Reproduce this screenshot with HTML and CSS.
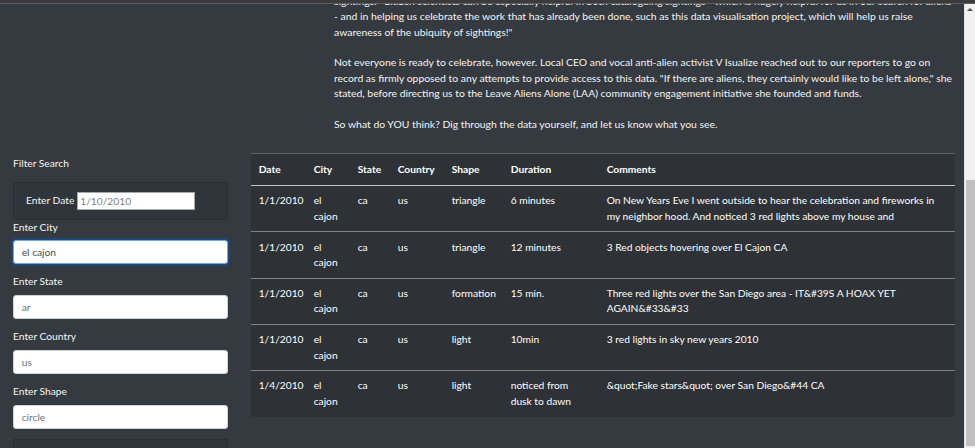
FILE: index.html
```html
<!DOCTYPE html>
<html lang="en">
<head>
<meta charset="utf-8">
<title>UFO Sightings</title>
<link rel="stylesheet" href="styles.css">
</head>
<body>
<div class="topbar"></div>
<div class="page">
  <main class="main">
    <section class="article">
      <p>sightings. "Citizen scientists can be especially helpful in both cataloguing sightings - which is hugely helpful for us in our search for aliens - and in helping us celebrate the work that has already been done, such as this data visualisation project, which will help us raise awareness of the ubiquity of sightings!"<br><br>Not everyone is ready to celebrate, however. Local CEO and vocal anti-alien activist V Isualize reached out to our reporters to go on record as firmly opposed to any attempts to provide access to this data. "If there are aliens, they certainly would like to be left alone," she stated, before directing us to the Leave Aliens Alone (LAA) community engagement initiative she founded and funds.<br><br>So what do YOU think? Dig through the data yourself, and let us know what you see.</p>
    </section>
    <div class="content">
      <aside class="filters">
        <div class="filter-title">Filter Search</div>
        <div class="date-box">
          <label class="date-label" for="datetime">Enter Date</label>
          <input class="date-input" id="datetime" type="text" placeholder="1/10/2010">
        </div>
        <div class="group">
          <label class="lbl" for="city">Enter City</label>
          <input class="ctl focus" id="city" type="text" value="el cajon">
        </div>
        <div class="group">
          <label class="lbl" for="state">Enter State</label>
          <input class="ctl" id="state" type="text" placeholder="ar">
        </div>
        <div class="group">
          <label class="lbl" for="country">Enter Country</label>
          <input class="ctl" id="country" type="text" placeholder="us">
        </div>
        <div class="group">
          <label class="lbl" for="shape">Enter Shape</label>
          <input class="ctl" id="shape" type="text" placeholder="circle">
        </div>
        <div class="btn-box"></div>
      </aside>
      <div class="table-wrap">
        <table class="ufo">
          <colgroup>
            <col style="width:55px"><col style="width:44px"><col style="width:40px"><col style="width:54px"><col style="width:59px"><col style="width:96px"><col>
          </colgroup>
          <thead>
            <tr><th>Date</th><th>City</th><th>State</th><th>Country</th><th>Shape</th><th>Duration</th><th>Comments</th></tr>
          </thead>
          <tbody>
            <tr><td>1/1/2010</td><td>el cajon</td><td>ca</td><td>us</td><td>triangle</td><td>6 minutes</td><td>On New Years Eve I went outside to hear the celebration and fireworks in my neighbor hood. And noticed 3 red lights above my house and</td></tr>
            <tr><td>1/1/2010</td><td>el cajon</td><td>ca</td><td>us</td><td>triangle</td><td>12 minutes</td><td>3 Red objects hovering over El Cajon CA</td></tr>
            <tr><td>1/1/2010</td><td>el cajon</td><td>ca</td><td>us</td><td>formation</td><td>15 min.</td><td>Three red lights over the San Diego area - IT&amp;#39S A HOAX YET AGAIN&amp;#33&amp;#33</td></tr>
            <tr><td>1/1/2010</td><td>el cajon</td><td>ca</td><td>us</td><td>light</td><td>10min</td><td>3 red lights in sky new years 2010</td></tr>
            <tr><td>1/4/2010</td><td>el cajon</td><td>ca</td><td>us</td><td>light</td><td>noticed from dusk to dawn</td><td>&amp;quot;Fake stars&amp;quot; over San Diego&amp;#44 CA</td></tr>
          </tbody>
        </table>
      </div>
    </div>
  </main>
  <div class="scrollbar">
    <div class="sb-arrow"></div>
    <div class="sb-track"><div class="sb-thumb"></div></div>
  </div>
</div>
</body>
</html>
```
FILE: styles.css
```css
* { box-sizing: border-box; }
html, body { margin: 0; padding: 0; height: 100%; overflow: hidden; }
body {
  background: #343a40;
  color: #f4f4f4;
  font-family: Lato, "Open Sans", sans-serif;
  font-size: 10.24px;
  line-height: 15.36px;
}
.topbar {
  position: fixed;
  top: 0; left: 0; right: 0;
  height: 4px;
  background: #3b3b3b;
  border-bottom: 1px solid #5c5f64;
  z-index: 5;
}
.page { display: flex; height: 448px; }
.main { flex: 1; min-width: 0; }
.article { margin-top: -6px; padding: 0 7px 0 334px; font-size: 10.4px; }
.article p { margin: 0; }
.content { display: flex; margin-top: 21px; align-items: flex-start; }
.filters { width: 215px; margin-left: 13px; padding-top: 3px; }
.filter-title { margin-bottom: 10px; }
.date-box {
  background: #30353b;
  border: 1px solid #2b2f34;
  height: 38px;
  padding: 8px 12px;
  display: flex;
  align-items: center;
}
.date-label { margin-right: 3px; }
.date-input {
  width: 118px; height: 18px;
  border: 1px solid #a5a8ab;
  background: #fff;
  font: inherit;
  padding: 0 2px;
  color: #495057;
}
.date-input::placeholder { color: #808080; }
.group { margin-bottom: 10.24px; }
.lbl { display: block; margin-bottom: 5px; }
.ctl {
  display: block;
  width: 100%;
  height: 24.3px;
  padding: 0 7.7px;
  border: 1px solid #ced4da;
  border-radius: 3px;
  background: #fff;
  font: inherit;
  color: #495057;
}
.ctl::placeholder { color: #6c757d; }
.ctl.focus {
  border-color: #6fa8e8;
  box-shadow: 0 0 0 2px rgba(0, 90, 200, 0.45);
  outline: none;
}
.btn-box {
  margin-top: 5px;
  height: 20px;
  background: #30353b;
  border: 1px solid #2b2f34;
}
.table-wrap { margin-left: 23px; width: 704px; }
.ufo {
  width: 100%;
  table-layout: fixed;
  border-collapse: collapse;
  background: #2e3237;
  color: #fff;
}
.ufo th, .ufo td {
  text-align: left;
  vertical-align: top;
  padding: 7.3px 7.68px;
}
.ufo th {
  font-weight: 700;
  border-top: 1px solid #5e636a;
  border-bottom: 1px solid #c2c5c8;
  padding-top: 7.68px;
  padding-bottom: 7.68px;
}
.ufo td { border-top: 1px solid #80858b; }
.ufo tbody tr:first-child td { border-top: none; }
.scrollbar {
  width: 11px;
  background: #f1f1f1;
  border-left: 1px solid #e2e2e2;
  display: flex;
  flex-direction: column;
  padding-top: 5px;
}
.sb-arrow {
  align-self: center;
  margin-top: 3px;
  width: 0; height: 0;
  border-left: 3px solid transparent;
  border-right: 3px solid transparent;
  border-bottom: 3px solid #505050;
}
.sb-track { flex: 1; display: flex; flex-direction: column; padding: 169px 0 2px 1px; }
.sb-thumb { flex: 1; background: #c1c1c1; }
```
